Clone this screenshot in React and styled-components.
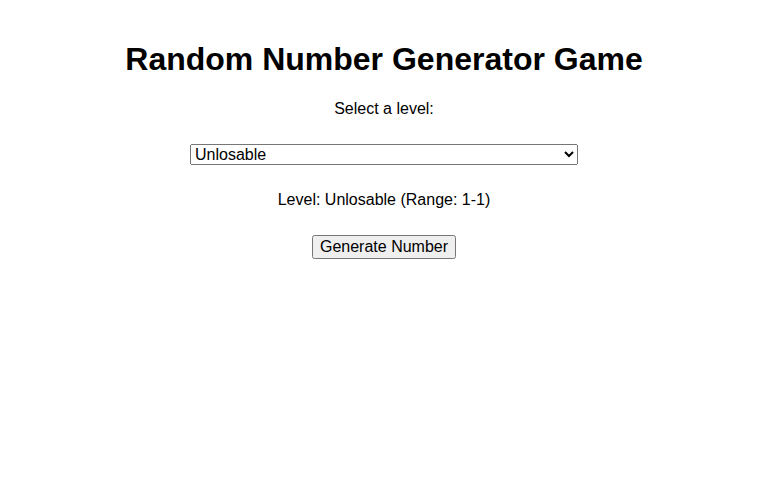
import styled, { createGlobalStyle } from "styled-components";

const GlobalStyle = createGlobalStyle`
  body {
    margin: 0;
    background: #ffffff;
    font-family: "Liberation Sans", Arial, sans-serif;
    color: #000000;
  }
`;

const Page = styled.div`
  padding: 20px;
  text-align: center;
`;

const Title = styled.h1`
  font-size: 32px;
  font-weight: bold;
  margin: 21px 0 22px;
`;

const Text = styled.p`
  font-size: 16px;
  margin: 16px 0;
`;

const LevelSelect = styled.select`
  width: 388px;
  font-family: "Liberation Sans", Arial, sans-serif;
  font-size: 16px;
  margin: 10px 0 10px;
`;

const Button = styled.button`
  font-family: "Liberation Sans", Arial, sans-serif;
  font-size: 16px;
  margin-top: 10px;
`;

const App = () => {
  return (
    <Page>
      <GlobalStyle />
      <Title>Random Number Generator Game</Title>
      <Text>Select a level:</Text>
      <LevelSelect defaultValue="unlosable">
        <option value="unlosable">Unlosable</option>
        <option value="easy">Easy</option>
        <option value="medium">Medium</option>
        <option value="hard">Hard</option>
      </LevelSelect>
      <Text>Level: Unlosable (Range: 1-1)</Text>
      <Button>Generate Number</Button>
    </Page>
  );
};

export default App;
